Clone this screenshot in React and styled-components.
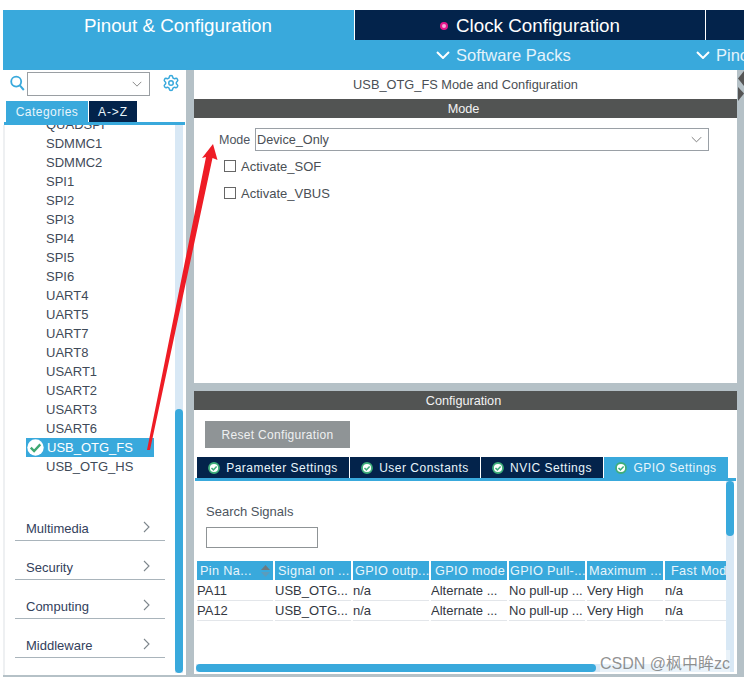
import React from "react";
import styled, { createGlobalStyle } from "styled-components";
import { Settings } from "lucide-react";

const Global = createGlobalStyle`
  html, body { margin: 0; padding: 0; background: #fff; }
  * { box-sizing: border-box; }
  body { font-family: "Liberation Sans", Arial, sans-serif; }
`;
const BLUE = "#39a9dc";
const NAVY = "#03234b";
const GRAY = "#b5c1c7";
const DARK = "#525453";

const Page = styled.div`
  position: relative; width: 744px; height: 677px; overflow: hidden;
  padding: 10px 0 0 3px; display: flex; flex-direction: column; background: #fff;
`;
const TopTabs = styled.div`display: flex; height: 30px; background: ${BLUE};`;
const TopTab = styled.div`
  width: ${p => p.$w}px; flex: none; display: flex; align-items: center; justify-content: center; gap: 8px;
  background: ${p => (p.$active ? BLUE : NAVY)};
  border-right: ${p => (p.$last ? "0" : "1px solid #fff")};
  color: #fff; font-size: 18.8px; padding-top: 1px;
  padding-right: ${p => p.$pr || 0}px;
`;
const Dot = styled.span`
  width: 8px; height: 8px; border-radius: 50%; background: #f4a9d8; border: 2px solid #e6168c; flex: none;
`;
const SubBar = styled.div`
  height: 30px; background: ${BLUE}; display: flex; align-items: center; color: #e4f3fb; font-size: 16.5px;
  padding-left: 433px; white-space: nowrap; overflow: hidden;
`;
const SubItem = styled.div`
  display: flex; align-items: center; gap: 6px; flex: none; width: ${p => p.$w}px;
  svg { flex: none; }
`;
const Body = styled.div`
  flex: 1; min-height: 0; display: flex; background: ${GRAY}; padding-bottom: 2px;
`;
const Sidebar = styled.aside`
  width: 183px; flex: none; background: #fff; display: flex; flex-direction: column;
`;
const SearchRow = styled.div`
  height: 31px; display: flex; align-items: flex-start; padding: 2px 0 0 7px;
`;
const Combo = styled.div`
  width: 123px; height: 24px; margin-left: 2px; border: 1px solid #9a9fa3; display: flex;
  align-items: center; justify-content: flex-end; padding-right: 7px; background: #fff;
`;
const GearWrap = styled.div`margin: 2px 0 0 12px; width: 18px; height: 18px; color: ${BLUE};`;
const CatTabs = styled.div`display: flex; gap: 1px; height: 21px; padding-left: 3px;`;
const CatTab = styled.div`
  height: 21px; width: ${p => p.$w}px; background: ${p => (p.$active ? BLUE : NAVY)};
  color: #e8f5fb; font-size: 12px; letter-spacing: ${p => (p.$active ? 0.45 : 0.9)}px; display: flex; align-items: center; justify-content: center;
`;
const BlueRule = styled.div`height: 3px; background: ${BLUE}; margin: 0 ${p => p.$mr || 0}px 0 ${p => p.$ml || 0}px; flex: none;`;
const SideBody = styled.div`flex: 1; min-height: 0; display: flex;`;
const SideContent = styled.div`
  width: 172px; flex: none; overflow: hidden; display: flex; flex-direction: column; box-shadow: inset 2px 0 0 #eef0f2;
`;
const PeriphList = styled.ul`
  list-style: none; margin: -10px 0 0; padding: 0; display: flex; flex-direction: column; height: 369px; flex: none;
`;
const PeriphItem = styled.li`
  height: 19px; line-height: 19px; font-size: 13px; color: ${p => (p.$sel ? "#fff" : "#3f4a58")};
  padding-left: ${p => (p.$sel ? 21 : 43)}px; margin-left: ${p => (p.$sel ? 23 : 0)}px;
  width: ${p => (p.$sel ? "128px" : "auto")};
  background: ${p => (p.$sel ? BLUE : "transparent")};
  display: flex; align-items: center; position: relative; white-space: nowrap; flex: none;
`;
const CheckBadge = styled.span`position: absolute; left: 1px; top: 1px; display: flex;`;
const CatList = styled.div`margin-top: 36px; padding: 0 10px 0 12px; display: flex; flex-direction: column; gap: 18px;`;
const CatRow = styled.div`
  height: 21px; border-bottom: 1px solid #a9b4bb; display: flex; align-items: flex-start; justify-content: space-between;
  font-size: 13px; color: #33415c; padding: 1px 15px 0 11px; line-height: 16px;
`;
const Track = styled.div`
  width: 8px; margin: 0 3px 2px 0; flex: none; background: #d8e8f5; display: flex; flex-direction: column; justify-content: ${p => p.$justify || "flex-end"};
`;
const Thumb = styled.div`
  height: ${p => p.$h}px; background: ${BLUE}; border-radius: 4px;
`;
const Splitter = styled.div`width: 8px; flex: none; background: ${GRAY};`;
const Main = styled.main`width: 543px; flex: none; display: flex; flex-direction: column; background: ${GRAY}; gap: 8px;`;
const Panel = styled.section`
  background: #fff; height: ${p => p.$h}px; flex: none; display: flex; flex-direction: column;
`;
const PanelTitle = styled.div`
  height: 29px; display: flex; align-items: center; justify-content: center; font-size: 12.8px; color: #4a4f55;
`;
const Bar = styled.div`
  height: 19px; background: ${DARK}; color: #f2f2f2; font-size: 12.7px; display: flex; align-items: center; justify-content: center; flex: none; padding-right: 4px;
`;
const ModeRow = styled.div`display: flex; align-items: center; margin: 10px 0 0 25px; height: 23px;`;
const ModeLabel = styled.label`font-size: 12.5px; color: #4d5560; width: 36px;`;
const SelectBox = styled.div`
  width: 454px; height: 23px; border: 1px solid #9aa0a6; display: flex; align-items: center; justify-content: space-between;
  padding: 0 6px 0 1px; font-size: 12.7px; color: #4a4f55;
`;
const CheckRow = styled.div`
  display: flex; align-items: center; gap: 5px; margin-left: 30px; height: 14px; font-size: 13px; color: #4a4f55;
  margin-top: ${p => p.$mt}px;
`;
const Box = styled.span`width: 12px; height: 12px; border: 1px solid #666; flex: none; background: #fff;`;
const ResetBtn = styled.button`
  width: 145px; height: 27px; margin: 11px 0 0 11px; background: #8f9496; color: #eef0f1; border: 0; padding: 0; flex: none;
  font: 12px "Liberation Sans", Arial, sans-serif; letter-spacing: 0.3px; display: block;
`;
const ConfTabs = styled.div`display: flex; gap: 1px; margin: 9px 0 0 3px; height: 21px; flex: none;`;
const ConfTab = styled.div`
  width: ${p => p.$w}px; height: 21px; background: ${p => (p.$active ? BLUE : NAVY)};
  color: #e8f5fb; font-size: 12px; letter-spacing: 0.5px; display: flex; align-items: center; justify-content: center; gap: 6px; white-space: nowrap;
`;
const ConfBody = styled.div`flex: 1; min-height: 0; display: flex; margin-left: 2px;`;
const ConfContent = styled.div`width: 530px; flex: none; display: flex; flex-direction: column; overflow: hidden;`;
const ConfInner = styled.div`flex: 1; min-height: 0; padding-top: 23px;`;
const SearchLabel = styled.div`font-size: 13px; color: #4d5560; margin-left: 10px; height: 15px; line-height: 15px;`;
const SearchInput = styled.div`width: 112px; height: 21px; margin: 8px 0 0 10px; border: 1px solid #8f9496; background: #fff;`;
const Table = styled.div`margin: 13px 0 0 1px; display: flex; flex-direction: column; gap: 1px;`;
const Row = styled.div`display: flex; gap: 2px; height: 19px;`;
const HeadCell = styled.div`
  width: ${p => p.$w}px; flex: none; height: 19px; background: ${BLUE}; color: #e8f5fb; font-size: 12.7px; letter-spacing: 0.35px;
  display: flex; align-items: center; justify-content: space-between; padding: 0 3px 0 ${p => p.$pl}px; white-space: nowrap; overflow: hidden;
`;
const DataCell = styled.div`
  width: ${p => p.$w}px; flex: none; height: 20px; color: #33373f; font-size: 13px; border-bottom: 1px solid #e3e6ea; position: relative;
  display: flex; align-items: center; white-space: nowrap; overflow: hidden; margin-bottom: -1px;
`;
const HScrollTrack = styled.div`height: 8px; background: #d8e8f5; margin-bottom: 2px; flex: none;`;
const HThumb = styled.div`width: 400px; height: 8px; background: ${BLUE}; border-radius: 4px;`;
const GutterRight = styled.div`width: 7px; flex: none; background: ${GRAY};`;
const Grip = styled.svg`display: block; margin-top: 1px;`;
const Overlay = styled.svg`position: absolute; left: 0; top: 0; pointer-events: none;`;
const Watermark = styled.div`
  position: absolute; left: 600px; top: 650px; font-size: 16px; color: rgba(110,110,110,.75); white-space: nowrap;
  font-family: "Liberation Sans", "Noto Sans CJK SC", sans-serif; background: rgba(255,255,255,.45);
`;

const Down = ({ w = 14, h = 8, color = "#fff", sw = 2 }) => (
  <svg width={w} height={h} viewBox="0 0 14 8"><path d="M1 1l6 6 6-6" fill="none" stroke={color} strokeWidth={sw} /></svg>
);
const Right = () => (
  <svg width="7" height="12" viewBox="0 0 7 12"><path d="M1 1l5 5-5 5" fill="none" stroke="#7d868c" strokeWidth="1.1" /></svg>
);
const Check = () => (
  <svg width="12" height="12" viewBox="0 0 12 12" style={{ flex: "none" }}>
    <circle cx="6" cy="6" r="5" fill="#fff" stroke="#3fae7a" strokeWidth="1.8" />
    <path d="M3.500 6l1.900 1.900 3.200-3.500" fill="none" stroke="#3fae7a" strokeWidth="1.500" />
  </svg>
);
const BigCheck = () => (
  <svg width="17" height="17" viewBox="0 0 17 17">
    <circle cx="8.500" cy="8.500" r="8.200" fill="#fff" />
    <path d="M3.800 8.600l3.300 3.400 6.200-6.600" fill="none" stroke="#3fa872" strokeWidth="2.400" />
  </svg>
);

const periph = ["QUADSPI","SDMMC1","SDMMC2","SPI1","SPI2","SPI3","SPI4","SPI5","SPI6","UART4","UART5","UART7","UART8","USART1","USART2","USART3","USART6","USB_OTG_FS","USB_OTG_HS"];
const cols = [76,76,76,76,76,76,61];
const pads = [3,3,2,4,1,2,6];
const head = ["Pin Na...","Signal on ...","GPIO outp...","GPIO mode","GPIO Pull-...","Maximum ...","Fast Mode"];
const rows = [
  ["PA11","USB_OTG...","n/a","Alternate ...","No pull-up ...","Very High","n/a"],
  ["PA12","USB_OTG...","n/a","Alternate ...","No pull-up ...","Very High","n/a"],
];

export default function App() {
  return (
    <Page>
      <Global />
      <TopTabs>
        <TopTab $active $w={352} $pr={1}>Pinout &amp; Configuration</TopTab>
        <TopTab $w={351}><Dot />Clock Configuration</TopTab>
        <TopTab $w={38} $last />
      </TopTabs>
      <SubBar>
        <SubItem $w={260}><Down />Software Packs</SubItem>
        <SubItem $w={60}><Down />Pinout</SubItem>
      </SubBar>
      <Body>
        <Sidebar>
          <SearchRow>
            <svg width="15" height="17" viewBox="0 0 15 17" style={{ marginTop: 3, flex: "none" }}>
              <circle cx="6.200" cy="6.600" r="5" fill="none" stroke={BLUE} strokeWidth="1.800" />
              <path d="M9.800 10.400l4 4.600" stroke={BLUE} strokeWidth="2" />
            </svg>
            <Combo><Down w={10} h={6} color="#777" sw={1.2} /></Combo>
            <GearWrap><Settings size={18} strokeWidth={2} /></GearWrap>
          </SearchRow>
          <CatTabs>
            <CatTab $active $w={82}>Categories</CatTab>
            <CatTab $w={48}>A-&gt;Z</CatTab>
          </CatTabs>
          <BlueRule $ml={1} $mr={1} />
          <SideBody>
            <SideContent>
              <PeriphList>
                {periph.map(p => (
                  <PeriphItem key={p} $sel={p === "USB_OTG_FS"}>
                    {p === "USB_OTG_FS" && <CheckBadge><BigCheck /></CheckBadge>}
                    {p}
                  </PeriphItem>
                ))}
              </PeriphList>
              <CatList>
                {["Multimedia","Security","Computing","Middleware"].map(c => (
                  <CatRow key={c}>{c}<Right /></CatRow>
                ))}
              </CatList>
            </SideContent>
            <Track><Thumb $h={264} /></Track>
          </SideBody>
        </Sidebar>
        <Splitter />
        <Main>
          <Panel $h={313}>
            <PanelTitle>USB_OTG_FS Mode and Configuration</PanelTitle>
            <Bar>Mode</Bar>
            <ModeRow>
              <ModeLabel>Mode</ModeLabel>
              <SelectBox>Device_Only<Down w={11} h={7} color="#777" sw={1.2} /></SelectBox>
            </ModeRow>
            <CheckRow $mt={8}><Box />Activate_SOF</CheckRow>
            <CheckRow $mt={13}><Box />Activate_VBUS</CheckRow>
          </Panel>
          <Panel $h={283}>
            <Bar>Configuration</Bar>
            <ResetBtn>Reset Configuration</ResetBtn>
            <ConfTabs>
              <ConfTab $w={152}><Check />Parameter Settings</ConfTab>
              <ConfTab $w={130}><Check />User Constants</ConfTab>
              <ConfTab $w={122}><Check />NVIC Settings</ConfTab>
              <ConfTab $active $w={124}><Check />GPIO Settings</ConfTab>
            </ConfTabs>
            <BlueRule $ml={1} $mr={1} />
            <ConfBody>
              <ConfContent>
                <ConfInner>
                  <SearchLabel>Search Signals</SearchLabel>
                  <SearchInput />
                  <Table>
                    <Row>
                      {head.map((h, i) => (
                        <HeadCell key={h} $w={cols[i]} $pl={pads[i]}>
                          {h}
                          {i === 0 && (
                            <svg width="9" height="12" viewBox="0 0 9 12" style={{ flex: "none" }}><path d="M4.500 0L9 5H0z" fill="#6d7a80" /><path d="M4.500 12L9 7H0z" fill="#5c9cbc" /></svg>
                          )}
                        </HeadCell>
                      ))}
                    </Row>
                    {rows.map((r, ri) => (
                      <Row key={ri}>
                        {r.map((c, i) => <DataCell key={i} $w={cols[i]}>{c}</DataCell>)}
                      </Row>
                    ))}
                  </Table>
                </ConfInner>
                <HScrollTrack><HThumb /></HScrollTrack>
              </ConfContent>
              <Track $justify="flex-start"><Thumb $h={55} /></Track>
            </ConfBody>
          </Panel>
        </Main>
        <GutterRight>
          <Grip width="7" height="30" viewBox="0 0 7 30">
            <path d="M7 0L1 7.500 7 15z" fill="#555" /><path d="M1 16l6 6.500L1 30z" fill="#555" />
          </Grip>
        </GutterRight>
      </Body>
      <Overlay width="744" height="677" viewBox="0 0 744 677">
        <path d="M213 144L217.500 160 212.500 158 150 450 147 450 206 157 202 158z" fill="#ee1c25" />
      </Overlay>
      <Watermark>CSDN @枫中眸zc</Watermark>
    </Page>
  );
}
